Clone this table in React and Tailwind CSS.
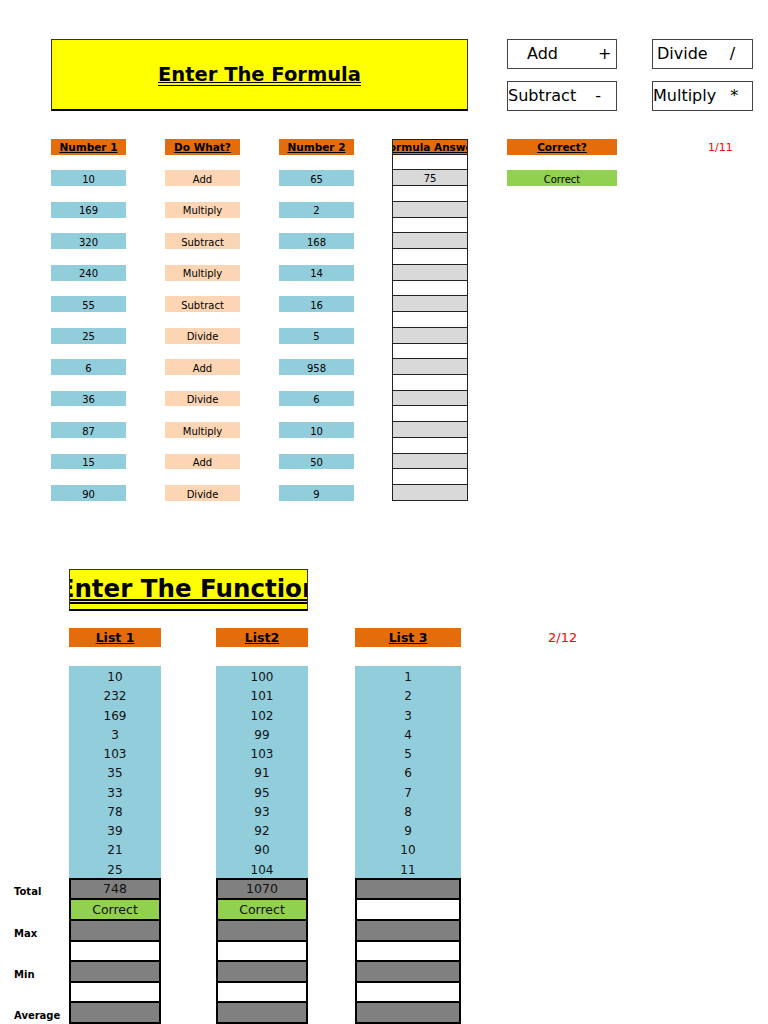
import { Fragment } from 'react';

const SLOT = 'h-[15.74px]';

const formulaRows = [
  [10, 'Add', 65],
  [169, 'Multiply', 2],
  [320, 'Subtract', 168],
  [240, 'Multiply', 14],
  [55, 'Subtract', 16],
  [25, 'Divide', 5],
  [6, 'Add', 958],
  [36, 'Divide', 6],
  [87, 'Multiply', 10],
  [15, 'Add', 50],
  [90, 'Divide', 9],
];

const lists = [
  { name: 'List 1', w: 'w-[92px]', values: [10, 232, 169, 3, 103, 35, 33, 78, 39, 21, 25], total: 748, correct: true },
  { name: 'List2', w: 'w-[92px]', values: [100, 101, 102, 99, 103, 91, 95, 93, 92, 90, 104], total: 1070, correct: true },
  { name: 'List 3', w: 'w-[106px]', values: [1, 2, 3, 4, 5, 6, 7, 8, 9, 10, 11], total: '', correct: false },
];

function Hdr({ children, className = '' }) {
  return (
    <div
      className={`${SLOT} flex items-center justify-center overflow-hidden whitespace-nowrap bg-[#e46c0a] pt-[2px] text-[10.5px] font-bold underline text-black ${className}`}
    >
      {children}
    </div>
  );
}

function TopCol({ title, values, bg }) {
  return (
    <div className="flex w-[75px] flex-col">
      <Hdr>{title}</Hdr>
      {values.map((v, i) => (
        <Fragment key={i}>
          <div className={SLOT} />
          <div className={`${SLOT} flex items-center justify-center ${bg} pt-[2px] text-[10px] text-black`}>{v}</div>
        </Fragment>
      ))}
    </div>
  );
}

function LegendBox({ label, sym, pl, gap }) {
  return (
    <div className={`flex h-[30px] items-center overflow-hidden whitespace-nowrap border border-[#444] text-[16px] text-black ${pl}`}>
      <span>{label}</span>
      <span className={gap}>{sym}</span>
    </div>
  );
}

function ListCol({ list }) {
  const stats = [
    { bg: 'bg-[#808080]', text: list.total },
    { bg: list.correct ? 'bg-[#92d050]' : 'bg-white', text: list.correct ? 'Correct' : '' },
    { bg: 'bg-[#808080]', text: '' },
    { bg: 'bg-white', text: '' },
    { bg: 'bg-[#808080]', text: '' },
    { bg: 'bg-white', text: '' },
    { bg: 'bg-[#808080]', text: '' },
    { bg: 'bg-white', text: '' },
  ];
  return (
    <div className={`flex ${list.w} flex-col`}>
      <div className="flex h-[19px] items-center justify-center bg-[#e46c0a] pt-px text-[12.5px] font-bold underline text-black">
        {list.name}
      </div>
      <div className="h-[19px]" />
      <div className="flex flex-col bg-[#92cddc]">
        {list.values.map((v, i) => (
          <div key={i} className="flex h-[19.27px] items-center justify-center pt-[3px] text-[12px] text-[#111]">
            {v}
          </div>
        ))}
      </div>
      <div className="flex flex-col border-x-2 border-t-2 border-black">
        {stats.map((s, i) => (
          <div
            key={i}
            className={`flex h-[20.57px] items-center justify-center border-b-2 border-black ${s.bg} pt-px text-[12.5px] text-[#111]`}
          >
            {s.text}
          </div>
        ))}
      </div>
    </div>
  );
}

export default function App() {
  const labels = ['Total', '', 'Max', '', 'Min', '', 'Average', ''];
  return (
    <div className="h-[1024px] w-[768px] overflow-hidden bg-white font-['DejaVu_Sans',sans-serif] text-black">
      <div className="pl-[51px] pt-[39px]">
        <div className="flex">
          <div className="flex h-[72px] w-[417px] items-center justify-center border-[1.5px] border-[#333] border-b-2 border-b-black bg-[#ffff00]">
            <span className="text-[19.5px] font-bold underline decoration-double">Enter The Formula</span>
          </div>
          <div className="ml-[39px] grid grid-cols-[110px_101px] gap-x-[35px] gap-y-[11px]">
            <LegendBox label="Add" sym="+" pl="pl-[19px]" gap="ml-[40px]" />
            <LegendBox label="Divide" sym="/" pl="pl-[4px]" gap="ml-[22px]" />
            <LegendBox label="Subtract" sym="-" pl="pl-0" gap="ml-[19px]" />
            <LegendBox label="Multiply" sym="*" pl="pl-0" gap="ml-[14px]" />
          </div>
        </div>

        <div className="mt-[28px] flex">
          <TopCol title="Number 1" values={formulaRows.map((r) => r[0])} bg="bg-[#92cddc]" />
          <div className="ml-[39px]">
            <TopCol title="Do What?" values={formulaRows.map((r) => r[1])} bg="bg-[#fcd5b4]" />
          </div>
          <div className="ml-[39px]">
            <TopCol title="Number 2" values={formulaRows.map((r) => r[2])} bg="bg-[#92cddc]" />
          </div>
          <div className="ml-[38px] flex w-[76px] flex-col border-x border-[#222]">
            <Hdr className="border-t border-b border-[#222]">Formula Answer</Hdr>
            {formulaRows.map((r, i) => (
              <Fragment key={i}>
                <div className={`${SLOT} border-b border-[#222] bg-white`} />
                <div className={`${SLOT} flex items-center justify-center border-b border-[#222] bg-[#d9d9d9] pt-px text-[10px]`}>
                  {i === 0 ? 75 : ''}
                </div>
              </Fragment>
            ))}
          </div>
          <div className="ml-[39px] flex w-[110px] flex-col">
            <Hdr>Correct?</Hdr>
            <div className={SLOT} />
            <div className={`${SLOT} flex items-center justify-center bg-[#92d050] pt-[2px] text-[10px]`}>Correct</div>
          </div>
          <div className={`ml-[91px] flex ${SLOT} items-center pt-[3px] text-[11px] text-[#ff0000]`}>1/11</div>
        </div>
      </div>

      <div className="mt-[68px] ml-[69px] flex h-[42px] w-[239px] items-center justify-center overflow-hidden whitespace-nowrap border-[1.5px] border-[#333] border-b-2 border-b-black bg-[#ffff00]">
        <span className="text-[24.5px] font-bold underline decoration-double">Enter The Function</span>
      </div>

      <div className="mt-[17px] flex">
        <div className="flex w-[69px] flex-col pl-[14px]">
          <div className="h-[19px]" />
          <div className="h-[19px]" />
          <div className="h-[212px]" />
          <div className="flex flex-col pt-px">
            {labels.map((l, i) => (
              <div key={i} className="flex h-[20.57px] items-end pb-px text-[10px] font-bold leading-[12px]">
                {l}
              </div>
            ))}
          </div>
        </div>
        <ListCol list={lists[0]} />
        <div className="ml-[55px]">
          <ListCol list={lists[1]} />
        </div>
        <div className="ml-[47px]">
          <ListCol list={lists[2]} />
        </div>
        <div className="ml-[87px] flex h-[19px] items-center pt-px text-[13px] text-[#ff0000]">2/12</div>
      </div>
    </div>
  );
}
